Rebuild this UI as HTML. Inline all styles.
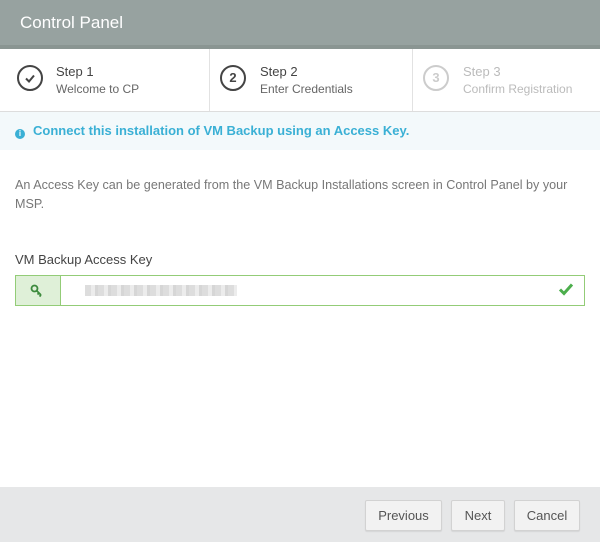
<!DOCTYPE html><html><head><style>
body{margin:0;width:600px;height:542px;font-family:"Liberation Sans",sans-serif;background:#fff;position:relative;overflow:hidden}
.a{position:absolute}
.hdr{left:0;top:0;width:580px;height:45px;background:#97a2a0;border-bottom:4px solid #8a9592;color:#fff;font-size:17px;line-height:45px;padding-left:20px;box-sizing:content-box}
.steps{top:49px;left:0;width:600px;height:62px;border-bottom:1px solid #ddd}
.st{top:0;height:62px;border-right:1px solid #e2e2e2}
.c{position:absolute;left:17px;top:16px;width:26px;height:26px;border:2px solid #444;border-radius:50%;box-sizing:border-box;text-align:center;font-weight:bold;font-size:13px;line-height:22px;color:#444}
.t1{position:absolute;left:56px;top:15px;font-size:13px;color:#444}
.t2{position:absolute;left:56px;top:33px;font-size:12px;color:#666}
.info{top:112px;left:0;width:600px;height:38px;background:#f3f9fb;color:#3ab0d5;font-size:13px;font-weight:bold;line-height:38px}
.btn{top:500px;height:31px;background:#f2f2f2;border:1px solid #d2d2d2;border-radius:2px;box-sizing:border-box;font-size:13px;color:#555;text-align:center;line-height:29px;box-shadow:0 1px 1px rgba(0,0,0,.08)}
</style></head><body>
<div class="a hdr">Control Panel</div>
<div class="a steps">
<div class="a st" style="left:0;width:209px"><div class="c"><svg width="22" height="22" viewBox="0 0 22 22" style="position:absolute;left:0;top:0"><path d="M7 11.5l3 3 5-6" fill="none" stroke="#444" stroke-width="2"/></svg></div><div class="t1">Step 1</div><div class="t2">Welcome to CP</div></div>
<div class="a st" style="left:210px;width:202px"><div class="c" style="left:10px">2</div><div class="t1" style="left:50px">Step 2</div><div class="t2" style="left:50px">Enter Credentials</div></div>
<div class="a st" style="left:413px;width:187px;border:0"><div class="c" style="left:10px;border-color:#ccc;color:#ccc">3</div><div class="t1" style="left:50px;color:#bbb">Step 3</div><div class="t2" style="left:50px;color:#bbb">Confirm Registration</div></div>
</div>
<div class="a info"><span style="display:inline-block;width:10px;height:10px;border-radius:50%;background:#3ab0d5;color:#fff;font-size:8px;line-height:10px;text-align:center;margin:0 8px 0 15px;vertical-align:-1px">i</span>Connect this installation of VM Backup using an Access Key.</div>
<div class="a" style="left:15px;top:176px;width:565px;font-size:12.6px;line-height:19px;color:#777">An Access Key can be generated from the VM Backup Installations screen in Control Panel by your MSP.</div>
<div class="a" style="left:15px;top:252px;font-size:13px;color:#444">VM Backup Access Key</div>
<div class="a" style="left:15px;top:275px;width:570px;height:31px;border:1px solid #93cc77;box-sizing:border-box;background:#fff"></div>
<div class="a" style="left:16px;top:276px;width:44px;height:29px;background:#dff0d8;border-right:1px solid #93cc77"><svg width="44" height="29" viewBox="0 0 44 29"><circle cx="18.5" cy="12.5" r="3" fill="none" stroke="#3c8a3c" stroke-width="1.8"/><path d="M20.5 14.5l4.5 4.5M23 17l-1.5 1.5M25 19l-1.5 1.5" stroke="#3c8a3c" stroke-width="1.8" fill="none"/></svg></div>
<div class="a" style="left:85px;top:285px;width:152px;height:11px;background:repeating-linear-gradient(90deg,#ddd 0 6px,#ececec 6px 10px,#d6d6d6 10px 13px)"></div>
<div class="a" style="left:558px;top:282px"><svg width="16" height="14" viewBox="0 0 16 14"><path d="M2 7.5l4 4 8-9" fill="none" stroke="#4cae4c" stroke-width="3"/></svg></div>
<div class="a" style="left:0;top:487px;width:600px;height:55px;background:#e6e7e8"></div>
<div class="a btn" style="left:365px;width:77px">Previous</div>
<div class="a btn" style="left:451px;width:54px">Next</div>
<div class="a btn" style="left:514px;width:66px">Cancel</div>
</body></html>
